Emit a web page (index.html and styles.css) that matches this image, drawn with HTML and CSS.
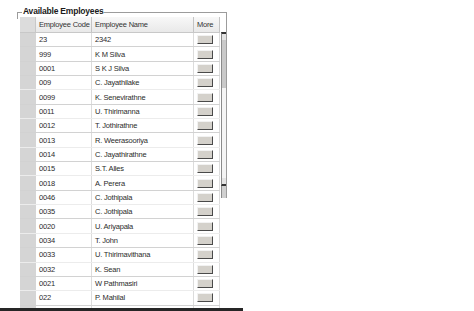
FILE: index.html
```html
<!DOCTYPE html>
<html lang="en">
<head>
    <meta charset="UTF-8">
    <title>Available Employees</title>
    <link rel="stylesheet" href="styles.css">
</head>
<body>
    <div class="group">
        <span class="group-title">Available Employees</span>
        <div class="grid">
            <div class="row head">
                <div class="rh"></div>
                <div class="cell code">Employee Code</div>
                <div class="cell name">Employee Name</div>
                <div class="cell more">More</div>
            </div>
            <div class="row"><div class="rh"></div><div class="cell code">23</div><div class="cell name">2342</div><div class="cell more"><button class="btn"></button></div></div>
            <div class="row"><div class="rh"></div><div class="cell code">999</div><div class="cell name">K M Silva</div><div class="cell more"><button class="btn"></button></div></div>
            <div class="row"><div class="rh"></div><div class="cell code">0001</div><div class="cell name">S K J Silva</div><div class="cell more"><button class="btn"></button></div></div>
            <div class="row"><div class="rh"></div><div class="cell code">009</div><div class="cell name">C. Jayathilake</div><div class="cell more"><button class="btn"></button></div></div>
            <div class="row"><div class="rh"></div><div class="cell code">0099</div><div class="cell name">K. Senevirathne</div><div class="cell more"><button class="btn"></button></div></div>
            <div class="row"><div class="rh"></div><div class="cell code">0011</div><div class="cell name">U. Thirimanna</div><div class="cell more"><button class="btn"></button></div></div>
            <div class="row"><div class="rh"></div><div class="cell code">0012</div><div class="cell name">T. Jothirathne</div><div class="cell more"><button class="btn"></button></div></div>
            <div class="row"><div class="rh"></div><div class="cell code">0013</div><div class="cell name">R. Weerasooriya</div><div class="cell more"><button class="btn"></button></div></div>
            <div class="row"><div class="rh"></div><div class="cell code">0014</div><div class="cell name">C. Jayathirathne</div><div class="cell more"><button class="btn"></button></div></div>
            <div class="row"><div class="rh"></div><div class="cell code">0015</div><div class="cell name">S.T. Alles</div><div class="cell more"><button class="btn"></button></div></div>
            <div class="row"><div class="rh"></div><div class="cell code">0018</div><div class="cell name">A. Perera</div><div class="cell more"><button class="btn"></button></div></div>
            <div class="row"><div class="rh"></div><div class="cell code">0046</div><div class="cell name">C. Jothipala</div><div class="cell more"><button class="btn"></button></div></div>
            <div class="row"><div class="rh"></div><div class="cell code">0035</div><div class="cell name">C. Jothipala</div><div class="cell more"><button class="btn"></button></div></div>
            <div class="row"><div class="rh"></div><div class="cell code">0020</div><div class="cell name">U. Ariyapala</div><div class="cell more"><button class="btn"></button></div></div>
            <div class="row"><div class="rh"></div><div class="cell code">0034</div><div class="cell name">T. John</div><div class="cell more"><button class="btn"></button></div></div>
            <div class="row"><div class="rh"></div><div class="cell code">0033</div><div class="cell name">U. Thirimavithana</div><div class="cell more"><button class="btn"></button></div></div>
            <div class="row"><div class="rh"></div><div class="cell code">0032</div><div class="cell name">K. Sean</div><div class="cell more"><button class="btn"></button></div></div>
            <div class="row"><div class="rh"></div><div class="cell code">0021</div><div class="cell name">W Pathmasiri</div><div class="cell more"><button class="btn"></button></div></div>
            <div class="row"><div class="rh"></div><div class="cell code">022</div><div class="cell name">P. Mahilal</div><div class="cell more"><button class="btn"></button></div></div>
            <div class="row"><div class="rh"></div><div class="cell code"></div><div class="cell name"></div><div class="cell more"><button class="btn"></button></div></div>
        </div>
        <div class="vscroll">
            <div class="arrow up"></div>
            <div class="thumb"></div>
            <div class="track"></div>
            <div class="arrow down"></div>
            <div class="corner"></div>
        </div>
    </div>
    <div class="taskbar"></div>
</body>
</html>
```

FILE: styles.css
```css
html, body {
    margin: 0;
    padding: 0;
    background: #fff;
    overflow: hidden;
}
body {
    font-family: "Liberation Sans", Arial, sans-serif;
    font-size: 7.5px;
    letter-spacing: -0.2px;
    color: #2b2b2b;
}
.group {
    position: relative;
    display: flex;
    align-items: flex-start;
    width: 210px;
    margin: 12px 0 0 17px;
    padding-left: 3px;
    border-top: 1px solid #9c9c9c;
    box-sizing: border-box;
}
.group::before {
    content: "";
    position: absolute;
    left: 0;
    top: 0;
    width: 1px;
    height: 6px;
    background: #9c9c9c;
}
.group-title {
    position: absolute;
    left: 5px;
    top: -7px;
    padding: 0 1px;
    background: #fff;
    font-weight: bold;
    font-size: 8.5px;
    line-height: 11px;
    color: #1a1a1a;
}
.grid {
    width: 200px;
    height: 291px;
    margin-top: 4px;
    overflow: hidden;
}
.row {
    display: grid;
    grid-template-columns: 16px 56px 102px 26px;
    height: 14.35px;
    box-sizing: border-box;
    border-bottom: 1px solid #ececec;
}
.row:nth-child(even) {
    border-bottom-color: #d2d2d2;
}
.row.head {
    height: 16px;
    border-bottom: 1px solid #c8c8c8;
    background: linear-gradient(#f8f8f8, #e9e9e9);
}
.row:nth-child(2), .row:nth-child(3) {
    border-bottom-color: #d2d2d2;
}
.rh {
    background: #d5d5d5;
}
.head .rh {
    background: #dcdcdc;
    border-right: 1px solid #c8c8c8;
}
.cell {
    display: flex;
    align-items: center;
    padding-left: 3px;
    white-space: nowrap;
    overflow: hidden;
    border-right: 1px solid #dcdcdc;
}
.head .cell {
    color: #333;
    border-right-color: #c4c4c4;
}
.btn {
    display: block;
    width: 16px;
    height: 9px;
    padding: 0;
    margin: 0;
    background: #d4d1cb;
    border: 1px solid;
    border-color: #f2f2f2 #4a4a4a #4a4a4a #f2f2f2;
}
.vscroll {
    display: flex;
    flex-direction: column;
    width: 7px;
    height: 185px;
    padding-top: 19px;
    box-sizing: border-box;
    border-right: 1px solid #9c9c9c;
}
.vscroll > div {
    margin-left: 1px;
    border-left: 1px solid #8a8a8a;
}
.arrow {
    height: 6px;
    background: #e4e4e4;
}
.arrow.up {
    border-top: 2px solid #333;
}
.thumb {
    height: 48px;
    background: #c9c9c9;
}
.track {
    flex: 1;
    background: #f4f4f4;
}
.arrow.down {
    border-bottom: 2px solid #333;
}
.corner {
    height: 12px;
    background: #d0d0d0;
}
.taskbar {
    width: 243px;
    height: 3px;
    background: #262626;
}
```
